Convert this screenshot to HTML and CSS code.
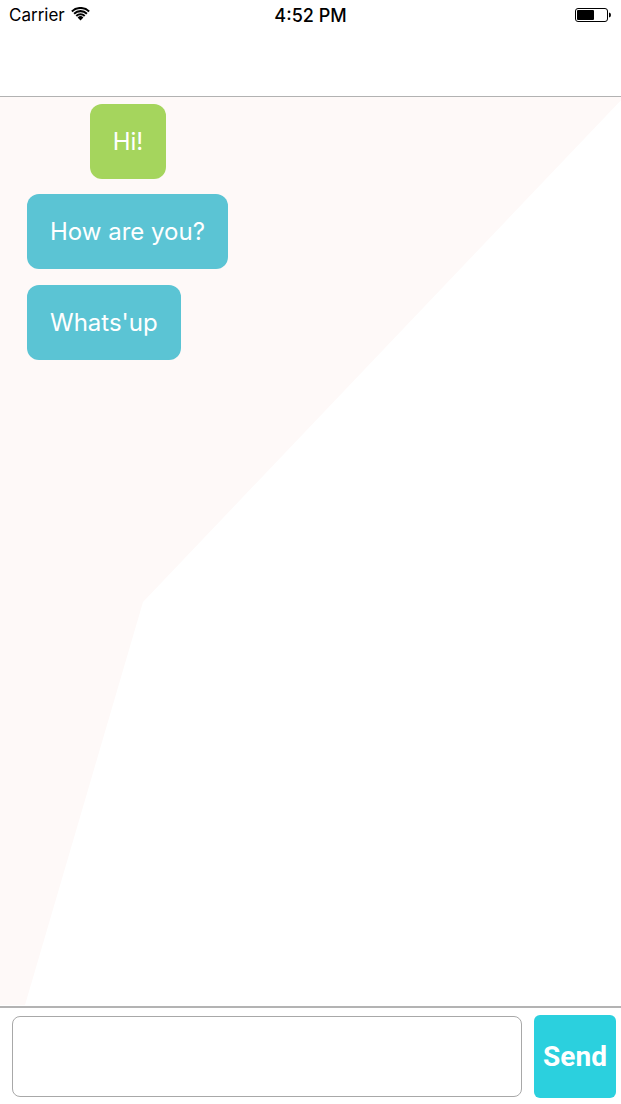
FILE: index.html
```html
<!DOCTYPE html>
<html lang="en">
<head>
    <meta charset="UTF-8">
    <meta name="viewport" content="width=device-width, initial-scale=1.0">
    <title>Chat</title>
    <link rel="stylesheet" href="styles.css">
</head>
<body>

<div class="statusBar">
    <div class="carrier">
        Carrier
        <svg class="wifi" width="19" height="14" viewBox="0 0 19 14">
            <path d="M9.5 13.5 L6.6 10.4 A4.2 4.2 0 0 1 12.4 10.4 Z" fill="#000"/>
            <path d="M4.6 8.3 A7 7 0 0 1 14.4 8.3 L13 9.8 A5 5 0 0 0 6 9.8 Z" fill="#000"/>
            <path d="M2.4 6 A10.2 10.2 0 0 1 16.6 6 L15.2 7.5 A8.2 8.2 0 0 0 3.8 7.5 Z" fill="#000"/>
            <path d="M0.2 3.7 A13.4 13.4 0 0 1 18.8 3.7 L17.4 5.2 A11.4 11.4 0 0 0 1.6 5.2 Z" fill="#000"/>
        </svg>
    </div>
    <div class="clock">4:52 PM</div>
    <div class="battery">
        <svg width="36" height="14" viewBox="0 0 36 14">
            <rect x="0.5" y="0.5" width="32" height="13" rx="2.5" fill="none" stroke="#000" stroke-width="1"/>
            <rect x="2" y="2" width="17" height="10" rx="1" fill="#000"/>
            <path d="M34 4.5 A2 2.5 0 0 1 34 9.5 Z" fill="#000"/>
        </svg>
    </div>
</div>

<div class="navBar"></div>

<div class="chatArea">
    <!-- backdrop shape behind the messages -->
    <svg class="backdrop" width="621" height="908" viewBox="0 0 621 908" preserveAspectRatio="none">
        <polygon points="0,0 624,0 143,505 25,908 0,908" fill="#fef9f8"/>
    </svg>

    <div class="messages">
        <div class="bubble green hi">Hi!</div>
        <div class="bubble blue">How are you?</div>
        <div class="bubble blue last">Whats'up</div>
    </div>
</div>

<div class="inputBar">
    <div class="textField"></div>
    <button class="sendButton">Send</button>
</div>

</body>
</html>
```

FILE: styles.css
```css
body, html {
    margin: 0;
    padding: 0;
    width: 621px;
    height: 1104px;
    overflow: hidden;
    background-color: #ffffff;
    font-family: 'Inter', 'Roboto', sans-serif;
}

body {
    display: flex;
    flex-direction: column;
}

.statusBar {
    height: 30px;
    display: flex;
    align-items: center;
    justify-content: space-between;
    padding: 0 10px 0 9px;
    position: relative;
}

.carrier {
    display: flex;
    align-items: center;
    gap: 6px;
    font-size: 17px;
    color: #000;
}

.wifi {
    margin-top: -2px;
}

.clock {
    position: absolute; /* centred over the bar */
    left: 0;
    right: 0;
    text-align: center;
    font-size: 18px;
    font-weight: 500;
    pointer-events: none;
}

.battery {
    display: flex;
    align-items: center;
}

.navBar {
    height: 66px;
    border-bottom: 1px solid #b2b2b2;
}

.chatArea {
    flex: 1;
    position: relative;
    overflow: hidden;
}

.backdrop {
    position: absolute;
    top: 0;
    left: 0;
}

.messages {
    position: relative;
    display: flex;
    flex-direction: column;
    align-items: flex-start;
    gap: 15px;
    padding: 7px 0 0 27px;
}

.bubble {
    height: 75px;
    display: flex;
    align-items: center;
    padding: 0 23px;
    border-radius: 12px;
    color: #fff;
    font-size: 24px;
    box-sizing: border-box;
}

.green {
    background-color: #a5d55d;
}

.blue {
    background-color: #5bc4d4;
}

.hi {
    margin-left: 63px;
    width: 76px;
    justify-content: center;
    padding: 0;
}

.last {
    margin-top: 1px;
}

.inputBar {
    height: 98px;
    border-top: 2px solid #b3b3b3;
    display: flex;
    align-items: center;
    gap: 12px;
    padding: 0 5px 0 12px;
    box-sizing: border-box;
}

.textField {
    flex: 1;
    height: 81px;
    border: 1px solid #a8a8a8;
    border-radius: 8px;
    box-sizing: border-box;
    margin-top: 1px;
}

.sendButton {
    width: 82px;
    height: 83px;
    border: none;
    border-radius: 6px;
    background-color: #2bd0de;
    color: #fff;
    font-family: 'Roboto', sans-serif;
    font-size: 28px;
    font-weight: 700;
    padding: 0;
}
```
